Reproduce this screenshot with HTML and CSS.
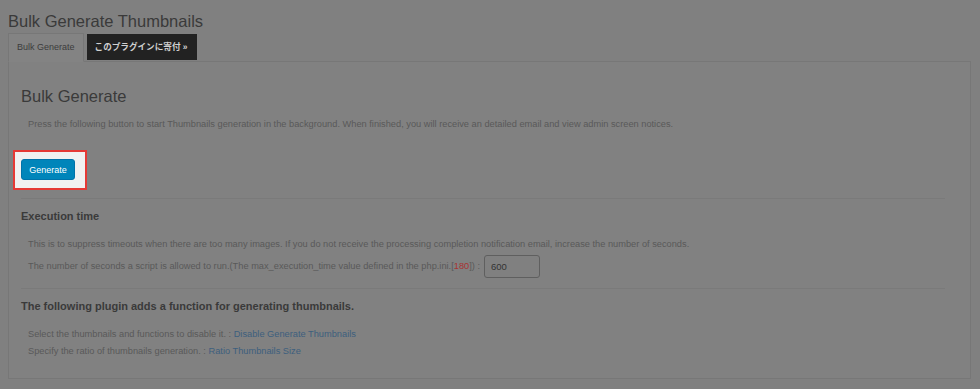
FILE: index.html
```html
<!DOCTYPE html>
<html lang="ja">

<head>
    <meta charset="UTF-8">
    <meta name="viewport" content="width=device-width, initial-scale=1.0">
    <title>Bulk Generate Thumbnails</title>
    <link rel="stylesheet" href="styles.css">
</head>

<body>
    <div class="wrap">
        <h1 class="page-title">Bulk Generate Thumbnails</h1>

        <!-- タブ -->
        <div class="tabs">
            <a class="tab tab-active" href="#">Bulk Generate</a>
            <a class="tab tab-donate" href="#">このプラグインに寄付 »</a>
        </div>

        <div class="panel">
            <h2 class="panel-title">Bulk Generate</h2>
            <p class="desc">Press the following button to start Thumbnails generation in the background. When finished, you will receive an detailed email and view admin screen notices.</p>

            <!-- ボタン（赤枠で強調） -->
            <div class="highlight">
                <button class="btn-primary">Generate</button>
            </div>

            <hr class="sep">

            <h3 class="section-title">Execution time</h3>
            <p class="desc line">This is to suppress timeouts when there are too many images. If you do not receive the processing completion notification email, increase the number of seconds.</p>
            <div class="desc field-row">
                <span>The number of seconds a script is allowed to run.(The max_execution_time value defined in the php.ini.[<span class="red">180</span>]) :</span>
                <input class="num-input" type="text" value="600">
            </div>

            <hr class="sep">

            <h3 class="section-title">The following plugin adds a function for generating thumbnails.</h3>
            <p class="desc line">Select the thumbnails and functions to disable it. : <a href="#">Disable Generate Thumbnails</a></p>
            <p class="desc line">Specify the ratio of thumbnails generation. : <a href="#">Ratio Thumbnails Size</a></p>
        </div>
    </div>
</body>

</html>
```

FILE: styles.css
```css
/* 画面全体（暗く覆われた管理画面） */
body {
    background: #808080;
    font-family: 'Liberation Sans', Arial, 'Noto Sans CJK JP', sans-serif;
    color: #3a3a3a;
    margin: 0;
    padding: 0;
}

.wrap {
    padding: 11px 9px 0 8px;
}

.page-title {
    font-size: 16.5px;
    font-weight: 400;
    line-height: 20px;
    margin: 0 0 2px;
    color: #3a3a3a;
}

/* タブ */
.tabs {
    display: flex;
    align-items: flex-start;
    gap: 3px;
    margin-bottom: -1px;
    position: relative;
    z-index: 1;
}

.tab {
    display: block;
    font-size: 9px;
    text-decoration: none;
    white-space: nowrap;
}

.tab-active {
    background: #838383;
    border: 1px solid #777;
    border-bottom-color: #838383;
    color: #3c3c3c;
    padding: 0 8px;
    line-height: 27px;
}

.tab-donate {
    background: #222;
    color: #d0d0d0;
    font-weight: 700;
    font-size: 8.6px;
    padding: 0 9px 0 8px;
    line-height: 26px;
    margin-top: 1px;
}

/* パネル */
.panel {
    border: 1px solid #777;
    background: #818181;
    padding: 24px 25px 18px 12px;
    width: 963px;
    box-sizing: border-box;
}

.panel-title {
    font-size: 16.5px;
    font-weight: 400;
    line-height: 20px;
    margin: 0 0 10px;
    color: #3a3a3a;
}

.desc {
    font-size: 9.25px;
    line-height: 17px;
    color: #595959;
    margin: 0;
    padding-left: 7px;
}

.desc a {
    color: #3d5f7e;
    text-decoration: none;
}

.highlight {
    display: inline-block;
    margin: 17px 0 0 -8px;
    border: 2px solid #e53935;
    background: #f1f1f1;
    padding: 7px 10px 8px 6px;
}

.btn-primary {
    display: block;
    background: #0085ba;
    border: 1px solid #0073aa;
    border-radius: 3px;
    color: #fff;
    font-family: inherit;
    font-size: 9px;
    width: 54px;
    height: 21px;
    padding: 0;
    cursor: pointer;
}

.sep {
    border: 0;
    border-top: 1px solid #7a7a7a;
    margin: 8px 0 10px;
}

.section-title {
    font-size: 11px;
    font-weight: 700;
    line-height: 14px;
    margin: 0 0 13px;
    color: #3a3a3a;
}

.field-row {
    display: flex;
    align-items: center;
    gap: 4px;
    height: 23px;
    margin-top: 2px;
}

.red {
    color: #a83232;
}

.num-input {
    width: 56px;
    height: 23px;
    box-sizing: border-box;
    border: 1px solid #5f5f5f;
    border-radius: 3px;
    background: #808080;
    color: #333;
    font-family: inherit;
    font-size: 9.5px;
    padding: 0 6px;
}

.field-row + .sep {
    margin-top: 10px;
}
```
